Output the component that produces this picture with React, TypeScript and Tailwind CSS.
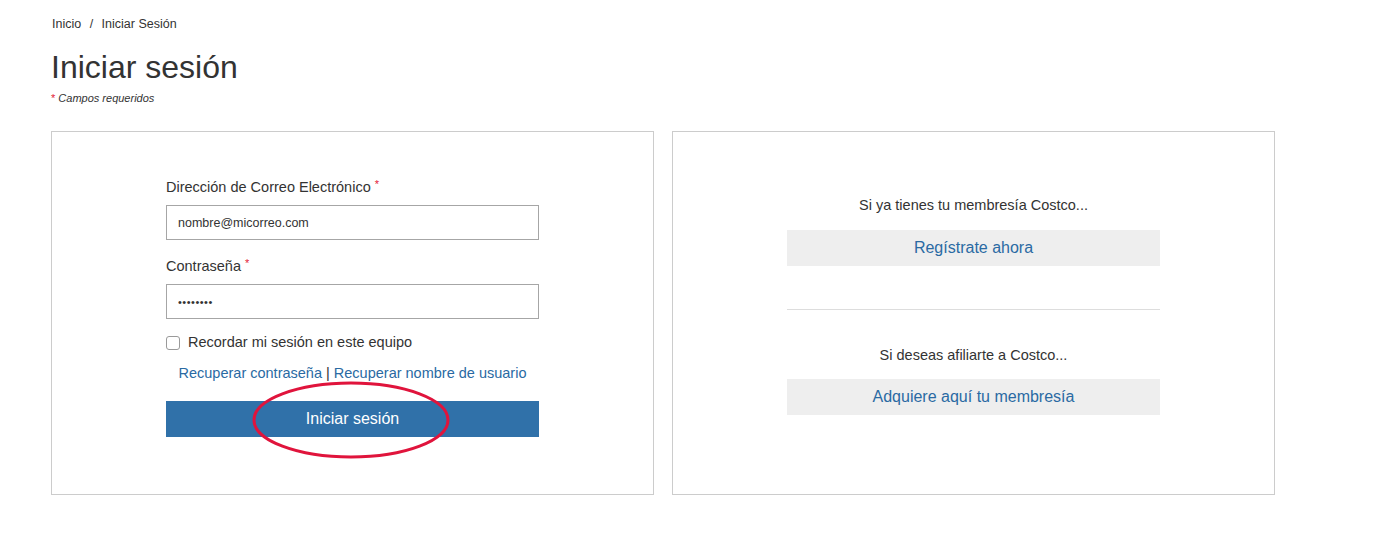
import React from 'react';

const font = { fontFamily: '"Liberation Sans", Arial, sans-serif' };

/* Left card: e-mail / password sign-in form */
const LoginForm: React.FC = () => (
  <div className="flex-1 border border-[#cccccc] pt-[45px] pb-[57px]">
    <div className="mx-auto w-[373px]">
      <label className="block text-[14.5px] leading-5 text-[#333]">
        Dirección de Correo Electrónico <span className="relative -top-1 text-[11px] text-[#e31837]">*</span>
      </label>
      <input
        readOnly
        value="nombre@micorreo.com"
        className="mt-[7px] block h-[35px] w-full border border-[#a6a6a6] px-[11px] text-[12.5px] text-[#333] outline-none"
      />

      <label className="mt-[16px] block text-[14.5px] leading-5 text-[#333]">
        Contraseña <span className="relative -top-1 text-[11px] text-[#e31837]">*</span>
      </label>
      <input
        readOnly
        type="password"
        value="12345678"
        className="mt-[7px] block h-[35px] w-full border border-[#a6a6a6] px-[11px] text-[11px] tracking-[0.5px] text-[#333] outline-none"
      />

      <div className="mt-[14px] flex h-5 items-center gap-2">
        <span className="h-[14px] w-[14px] rounded-[3px] border border-[#9a9a9a] bg-white" />
        <span className="text-[14.5px] text-[#333]">Recordar mi sesión en este equipo</span>
      </div>

      <div className="mt-[10px] text-center text-[14.5px] leading-5 text-[#333]">
        <a className="text-[#2a6aa3]">Recuperar contraseña</a> | <a className="text-[#2a6aa3]">Recuperar nombre de usuario</a>
      </div>

      <div className="relative mt-[18px]">
        <button className="block h-9 w-full bg-[#3071a9] text-[16px] text-white">Iniciar sesión</button>
        {/* hand-drawn red highlight over the button */}
        <svg className="pointer-events-none absolute left-[86px] top-[-20px]" width="200" height="80" viewBox="0 0 200 80">
          <ellipse cx="99" cy="39" rx="97" ry="37" fill="none" stroke="#e0143c" strokeWidth="3" />
        </svg>
      </div>
    </div>
  </div>
);

/* Right card: register / buy membership */
const MemberBox: React.FC = () => (
  <div className="flex-1 border border-[#cccccc] pt-[63px]">
    <div className="mx-auto w-[373px] text-center">
      <p className="text-[14.5px] leading-5 text-[#333]">Si ya tienes tu membresía Costco...</p>
      <a className="mt-[15px] flex h-9 items-center justify-center bg-[#eeeeee] text-[16px] text-[#2a6aa3]">
        Regístrate ahora
      </a>
      <div className="mt-[43px] h-px bg-[#dddddd]" />
      <p className="mt-[35px] text-[14.5px] leading-5 text-[#333]">Si deseas afiliarte a Costco...</p>
      <a className="mt-[14px] flex h-9 items-center justify-center bg-[#eeeeee] text-[16px] text-[#2a6aa3]">
        Adquiere aquí tu membresía
      </a>
    </div>
  </div>
);

export default function App() {
  return (
    <div className="min-h-[539px] w-[1375px] bg-white" style={font}>
      <div className="w-[1275px] pl-[51px]">
        <nav className="pt-[16px] pl-px text-[12.5px] leading-4 text-[#333]">
          Inicio <span className="mx-[5px]">/</span> Iniciar Sesión
        </nav>
        <h1 className="mt-[15px] text-[32px] leading-10 text-[#333]">Iniciar sesión</h1>
        <p className="mt-[3px] text-[11px] italic leading-4 text-[#333]">
          <span className="not-italic text-[#e31837]">*</span> Campos requeridos
        </p>
        <div className="mt-[25px] flex gap-[18px]">
          <LoginForm />
          <MemberBox />
        </div>
      </div>
    </div>
  );
}
